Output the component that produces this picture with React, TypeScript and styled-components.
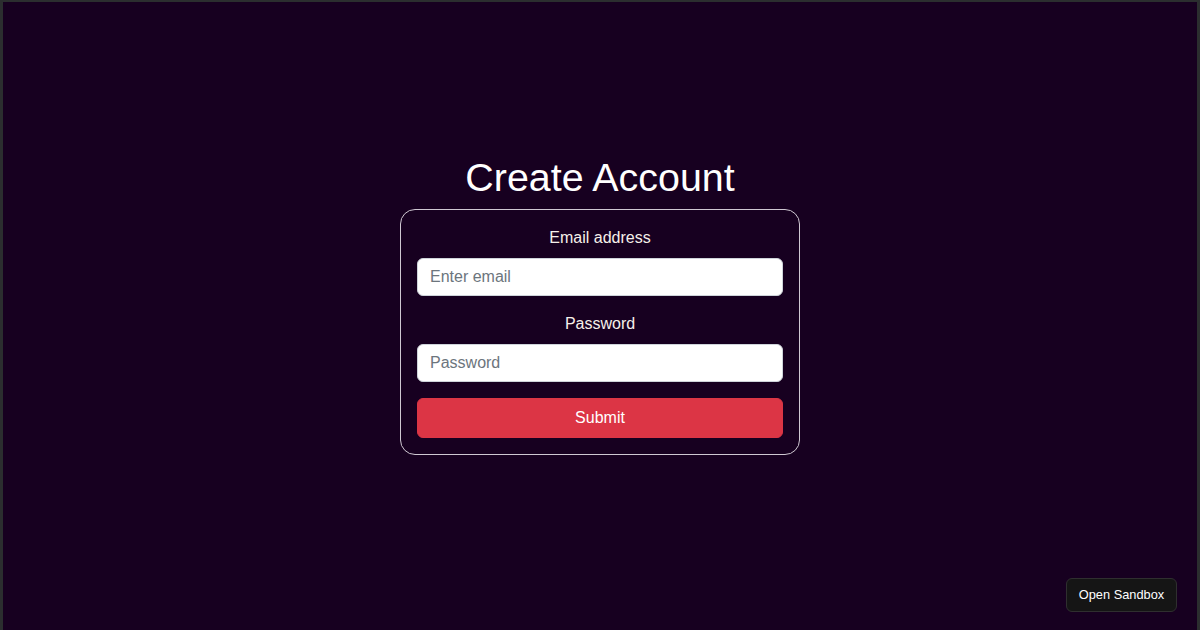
import React from "react";
import styled, { createGlobalStyle } from "styled-components";

const GlobalStyle = createGlobalStyle`
  *, *::before, *::after { box-sizing: border-box; }
  html, body { margin: 0; padding: 0; height: 100%; }
  body {
    background: #170020;
    font-family: "Liberation Sans", Arial, sans-serif;
    color: #fff;
  }
  #root { height: 100%; }
`;

const Frame = styled.div`
  height: 630px;
  border-top: 2px solid #2b2e2f;
  border-left: 3px solid #2b2e2f;
  border-right: 3px solid #2b2e2f;
  background: #170020;
  display: flex;
  flex-direction: column;
  align-items: center;
  padding-top: 151px;
  position: relative;
`;

const Title = styled.h1`
  margin: 0 0 8px;
  font-size: 39.4px;
  font-weight: 400;
  line-height: 48px;
  color: #fff;
  text-align: center;
`;

const Card = styled.form`
  width: 400px;
  border: 1px solid #cfc8d2;
  border-radius: 15px;
  padding: 16px;
  display: flex;
  flex-direction: column;
`;

const Field = styled.div`
  display: flex;
  flex-direction: column;
  margin-bottom: 16px;
`;

const Label = styled.label`
  display: block;
  text-align: center;
  font-size: 16px;
  line-height: 24px;
  margin-bottom: 8px;
  color: #f6f0ea;
`;

const Input = styled.input`
  display: block;
  width: 100%;
  height: 38px;
  padding: 6px 12px;
  font-family: "Liberation Sans", Arial, sans-serif;
  font-size: 16px;
  line-height: 24px;
  color: #212529;
  background: #fff;
  border: 1px solid #ced4da;
  border-radius: 6px;
  outline: none;
  &::placeholder { color: #6c757d; }
`;

const SubmitButton = styled.button`
  width: 100%;
  height: 40px;
  padding: 6px 12px;
  font-family: "Liberation Sans", Arial, sans-serif;
  font-size: 16px;
  line-height: 24px;
  color: #fff;
  background: #dc3545;
  border: 1px solid #dc3545;
  border-radius: 6px;
  cursor: pointer;
`;

const SandboxButton = styled.button`
  position: absolute;
  right: 20px;
  bottom: 18px;
  width: 111px;
  height: 34px;
  background: #151515;
  border: 1px solid #2f2f2f;
  border-radius: 6px;
  color: #fff;
  font-family: "Liberation Sans", Arial, sans-serif;
  font-size: 12.8px;
  padding: 0 0 2px;
  cursor: pointer;
`;

export default function App() {
  return (
    <>
      <GlobalStyle />
      <Frame>
        <Title>Create Account</Title>
        <Card onSubmit={(e) => e.preventDefault()}>
          <Field>
            <Label htmlFor="email">Email address</Label>
            <Input id="email" type="email" placeholder="Enter email" />
          </Field>
          <Field>
            <Label htmlFor="password">Password</Label>
            <Input id="password" type="password" placeholder="Password" />
          </Field>
          <SubmitButton type="submit">Submit</SubmitButton>
        </Card>
        <SandboxButton type="button">Open Sandbox</SandboxButton>
      </Frame>
    </>
  );
}
